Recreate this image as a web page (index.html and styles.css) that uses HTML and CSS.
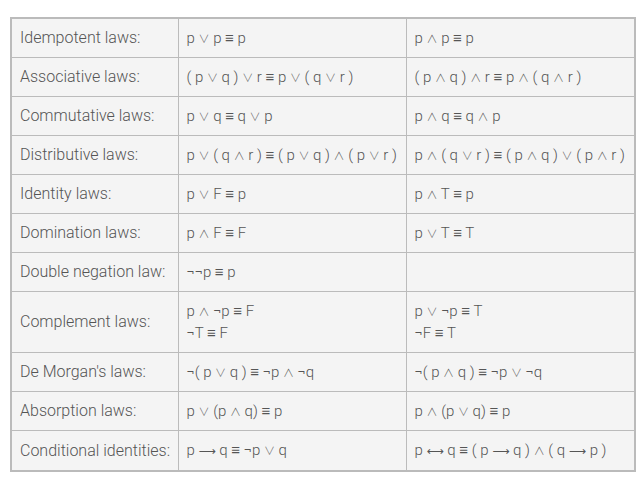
FILE: index.html
```html
<!DOCTYPE html>
<html>
<head>
<meta charset="utf-8">
<link rel="stylesheet" href="styles.css">
</head>
<body>
<div class="page">
<table class="laws">
<colgroup><col class="c1"><col class="c2"><col class="c3"></colgroup>
<tbody>
<tr><td>Idempotent laws:</td><td class="m">p <span class="op">∨</span> p ≡ p</td><td class="m">p <span class="op">∧</span> p ≡ p</td></tr>
<tr><td>Associative laws:</td><td class="m">( p <span class="op">∨</span> q ) <span class="op">∨</span> r ≡ p <span class="op">∨</span> ( q <span class="op">∨</span> r )</td><td class="m">( p <span class="op">∧</span> q ) <span class="op">∧</span> r ≡ p <span class="op">∧</span> ( q <span class="op">∧</span> r )</td></tr>
<tr><td>Commutative laws:</td><td class="m">p <span class="op">∨</span> q ≡ q <span class="op">∨</span> p</td><td class="m">p <span class="op">∧</span> q ≡ q <span class="op">∧</span> p</td></tr>
<tr><td>Distributive laws:</td><td class="m">p <span class="op">∨</span> ( q <span class="op">∧</span> r ) ≡ ( p <span class="op">∨</span> q ) <span class="op">∧</span> ( p <span class="op">∨</span> r )</td><td class="m">p <span class="op">∧</span> ( q <span class="op">∨</span> r ) ≡ ( p <span class="op">∧</span> q ) <span class="op">∨</span> ( p <span class="op">∧</span> r )</td></tr>
<tr><td>Identity laws:</td><td class="m">p <span class="op">∨</span> F ≡ p</td><td class="m">p <span class="op">∧</span> T ≡ p</td></tr>
<tr><td>Domination laws:</td><td class="m">p <span class="op">∧</span> F ≡ F</td><td class="m">p <span class="op">∨</span> T ≡ T</td></tr>
<tr><td>Double negation law:</td><td class="m">¬¬p ≡ p</td><td class="m"></td></tr>
<tr><td>Complement laws:</td><td class="m">p <span class="op">∧</span> ¬p ≡ F<br>¬T ≡ F</td><td class="m">p <span class="op">∨</span> ¬p ≡ T<br>¬F ≡ T</td></tr>
<tr><td>De Morgan's laws:</td><td class="m">¬( p <span class="op">∨</span> q ) ≡ ¬p <span class="op">∧</span> ¬q</td><td class="m">¬( p <span class="op">∧</span> q ) ≡ ¬p <span class="op">∨</span> ¬q</td></tr>
<tr><td>Absorption laws:</td><td class="m">p <span class="op">∨</span> (p <span class="op">∧</span> q) ≡ p</td><td class="m">p <span class="op">∧</span> (p <span class="op">∨</span> q) ≡ p</td></tr>
<tr><td>Conditional identities:</td><td class="m">p <span class="arr">⟶</span> q ≡ ¬p <span class="op">∨</span> q</td><td class="m">p <span class="arr">⟷</span> q ≡ ( p <span class="arr">⟶</span> q ) <span class="op">∧</span> ( q <span class="arr">⟶</span> p )</td></tr>
</tbody>
</table>
</div>
</body>
</html>
```
FILE: styles.css
```css
html, body {
  margin: 0;
  padding: 0;
  background: #ffffff;
}
.page {
  padding: 17px 0 0 10px;
}
.laws {
  border-collapse: collapse;
  table-layout: fixed;
  width: 624px;
  background: #f4f4f4;
  border: 2px solid #bbbbbb;
  font-family: Roboto, "Liberation Sans", sans-serif;
  font-weight: 300;
  font-size: 16px;
  color: #555555;
}
.c1 { width: 167px; }
.c2 { width: 228px; }
.c3 { width: 229px; }
.laws td {
  border: 1px solid #bbbbbb;
  padding: 8px 8px;
  line-height: 22px;
  vertical-align: middle;
  white-space: nowrap;
}
.laws td.m {
  font-size: 15px;
}
.op {
  font-family: "Noto Sans CJK JP", "DejaVu Sans", sans-serif;
  font-weight: 300;
  font-size: 11px;
}
.arr {
  font-family: "DejaVu Sans", sans-serif;
  font-weight: 400;
  font-size: 12px;
}
```
